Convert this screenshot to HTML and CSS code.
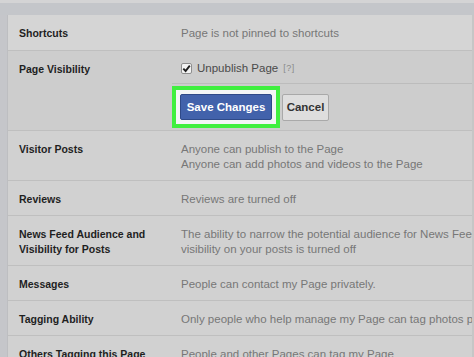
FILE: index.html
```html
<!DOCTYPE html>
<html>
<head>
<meta charset="utf-8">
<link rel="stylesheet" href="styles.css">
</head>
<body>
<div class="topbar"></div>
<div class="main">
  <div class="strip"></div>
  <div class="panel">
    <div class="row light">
      <div class="label">Shortcuts</div>
      <div class="value">Page is not pinned to shortcuts</div>
    </div>
    <div class="row pv">
      <div class="label">Page Visibility</div>
      <div class="pv-right">
        <div class="check-line">
          <span class="checkbox"><svg width="9" height="9" viewBox="0 0 9 9"><path d="M1.3 4.6 L3.6 7 L7.8 1.6" fill="none" stroke="#1e1e1e" stroke-width="1.9"/></svg></span>
          <span class="cb-label">Unpublish Page</span>
          <span class="help">[?]</span>
        </div>
        <div class="btn-line">
          <div class="highlight"><button class="btn-save">Save Changes</button></div>
          <button class="btn-cancel">Cancel</button>
        </div>
      </div>
    </div>
    <div class="row">
      <div class="label">Visitor Posts</div>
      <div class="value">Anyone can publish to the Page<br>Anyone can add photos and videos to the Page</div>
    </div>
    <div class="row">
      <div class="label">Reviews</div>
      <div class="value">Reviews are turned off</div>
    </div>
    <div class="row">
      <div class="label">News Feed Audience and<br>Visibility for Posts</div>
      <div class="value">The ability to narrow the potential audience for News Feed<br>visibility on your posts is turned off</div>
    </div>
    <div class="row">
      <div class="label">Messages</div>
      <div class="value">People can contact my Page privately.</div>
    </div>
    <div class="row">
      <div class="label">Tagging Ability</div>
      <div class="value">Only people who help manage my Page can tag photos posted on it</div>
    </div>
    <div class="row">
      <div class="label">Others Tagging this Page</div>
      <div class="value">People and other Pages can tag my Page</div>
    </div>
  </div>
</div>
</body>
</html>
```
FILE: styles.css
```css
html, body {
  margin: 0;
  padding: 0;
  width: 474px;
  height: 357px;
  overflow: hidden;
  background: #d1d1d1;
  font-family: "Liberation Sans", Arial, sans-serif;
}
.topbar {
  height: 12px;
  border-top: 3px solid #d4d4d5;
  background: #c4c6ca;
}
.main {
  display: flex;
}
.strip {
  width: 8px;
  flex: none;
  background: #c5c6ca;
  border-right: 1px solid #bdbec1;
  box-sizing: border-box;
}
.panel {
  flex: 1;
  min-width: 0;
  overflow: hidden;
  border-right: 2px solid #c6c6c6;
}
.row {
  display: grid;
  grid-template-columns: 153px 1fr;
  padding: 11px 0 8px 11px;
  border-bottom: 1px solid #bfbfbf;
  background: #d1d1d1;
  line-height: 15px;
}
.row.light {
  background: #d5d5d5;
  padding-bottom: 9px;
}
.label {
  font-weight: bold;
  font-size: 10.5px;
  color: #1f1f1f;
  white-space: nowrap;
}
.value {
  padding-left: 9px;
  font-size: 11.5px;
  color: #777777;
  white-space: nowrap;
  overflow: hidden;
}
.row.pv {
  background: #cdcdcd;
  padding: 0 0 0 11px;
}
.row.pv .label {
  padding-top: 11px;
}
.pv-right {
  min-width: 0;
}
.check-line {
  height: 33px;
  border-bottom: 1px solid #bcbcbc;
  display: flex;
  align-items: center;
  padding-left: 9px;
  padding-top: 2px;
  box-sizing: border-box;
}
.checkbox {
  width: 11px;
  height: 11px;
  box-sizing: border-box;
  border: 1px solid #8e8e8e;
  border-radius: 2px;
  background: #f2f2f2;
  display: flex;
  align-items: center;
  justify-content: center;
}
.cb-label {
  margin-left: 5px;
  font-size: 11.5px;
  color: #4a4a4a;
}
.help {
  margin-left: 5px;
  font-size: 9px;
  color: #8a8a8a;
  letter-spacing: 0.5px;
}
.btn-line {
  display: flex;
  align-items: center;
  padding: 2px 0 2px 0;
}
.highlight {
  border: 4px solid #3fef3f;
  padding: 4px;
  background: #f3f5f6;
  display: flex;
}
.btn-save {
  width: 92px;
  height: 26px;
  box-sizing: border-box;
  border: 1px solid #2f4a88;
  border-radius: 2px;
  background: #4262ab;
  color: #ffffff;
  font-family: "Liberation Sans", Arial, sans-serif;
  font-weight: bold;
  font-size: 11.5px;
  padding: 0;
}
.btn-cancel {
  margin-left: 2px;
  width: 47px;
  height: 27px;
  box-sizing: border-box;
  border: 1px solid #a9a9a9;
  border-radius: 2px;
  background: #dedede;
  color: #333333;
  font-family: "Liberation Sans", Arial, sans-serif;
  font-weight: bold;
  font-size: 11.5px;
  padding: 0;
}
```
